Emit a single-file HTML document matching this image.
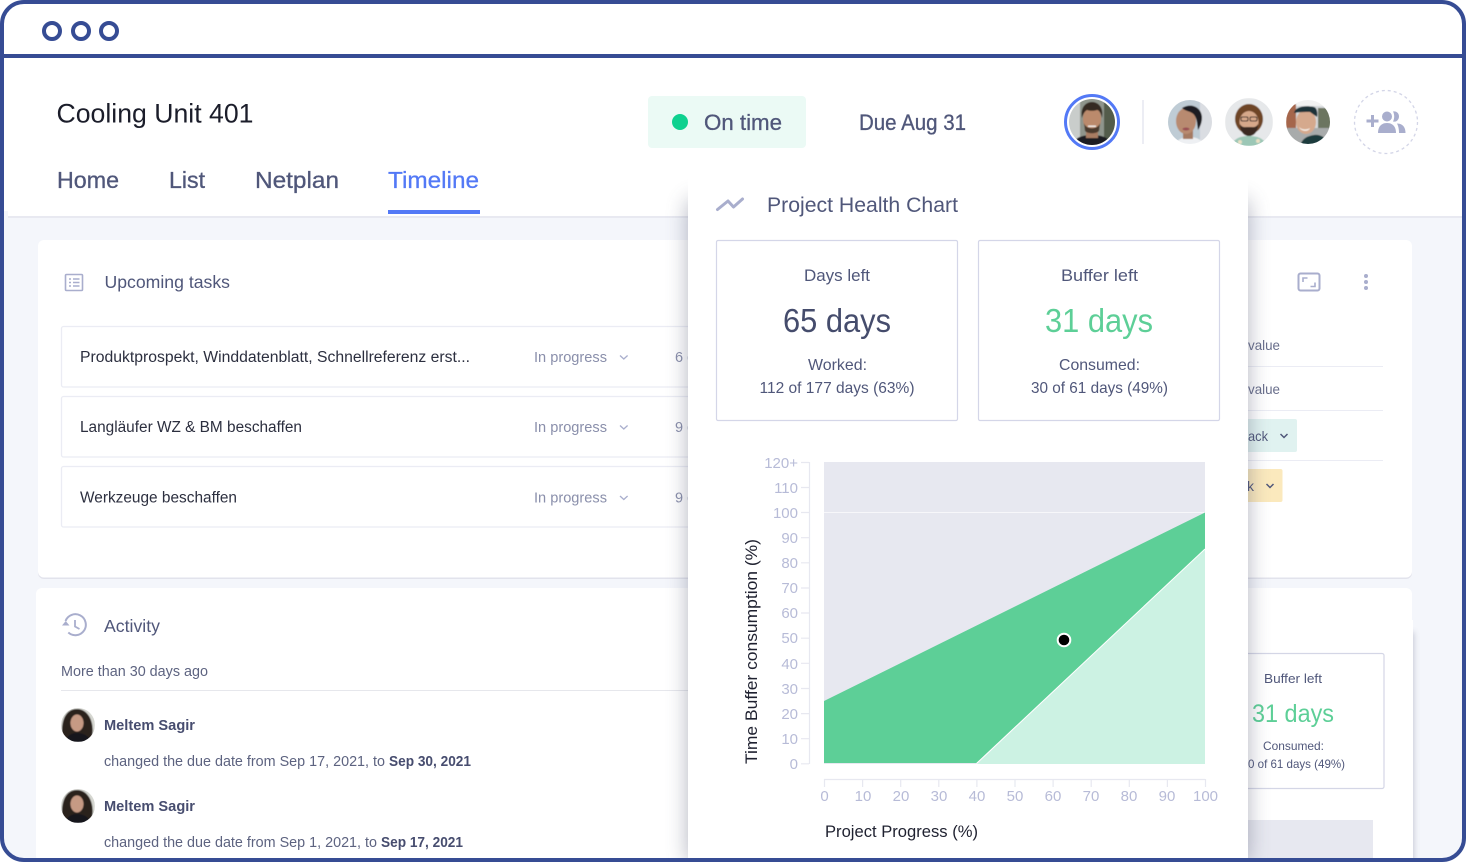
<!DOCTYPE html>
<html lang="en">
<head>
<meta charset="utf-8">
<title>Cooling Unit 401</title>
<style>
html,body{margin:0;padding:0;background:#fff;width:1466px;height:862px;overflow:hidden}
svg{display:block;width:1466px;height:862px;overflow:hidden}
text{font-family:"Liberation Sans",sans-serif;fill:#50577a}
.t{fill:#b7bbd7;font-size:15px}
.e{text-anchor:end}
.m{text-anchor:middle}
.b{stroke-width:.3px}
</style>
</head>
<body>
<svg xmlns="http://www.w3.org/2000/svg" width="1466" height="862" viewBox="0 0 1466 862">
<defs>
<clipPath id="frame"><rect x="3" y="3" width="1460" height="856" rx="21"/></clipPath>
<clipPath id="c0"><circle cx="1092" cy="122" r="23"/></clipPath>
<clipPath id="c1"><circle cx="1190" cy="122" r="22"/></clipPath>
<clipPath id="c2"><circle cx="1249" cy="122" r="24"/></clipPath>
<clipPath id="c3"><circle cx="1308" cy="122" r="22"/></clipPath>
<clipPath id="c4"><circle cx="78" cy="725" r="17"/></clipPath>
<clipPath id="c5"><circle cx="78" cy="806" r="17"/></clipPath>
<filter id="sh" x="-15%" y="-15%" width="130%" height="130%"><feGaussianBlur stdDeviation="11"/></filter>
<filter id="sh2" x="-20%" y="-20%" width="140%" height="140%"><feGaussianBlur stdDeviation="3"/></filter>
<filter id="soft" x="-10%" y="-10%" width="120%" height="120%"><feGaussianBlur stdDeviation="0.6"/></filter>
</defs>

<g clip-path="url(#frame)">
<rect x="0" y="0" width="1466" height="862" fill="#fff"/>
<rect x="0" y="218" width="1466" height="644" fill="#f4f6fb"/>
<rect x="4" y="211" width="4" height="7" fill="#f4f6fb"/>
<rect x="8" y="216" width="1458" height="2" fill="#e8e9f1"/>

<!-- Header -->
<text x="56.500" y="122.500" font-size="27" style="fill:#1b1d2a" textLength="197" lengthAdjust="spacingAndGlyphs">Cooling Unit 401</text>
<text class="b" stroke="#50577a" x="57" y="188" font-size="23" textLength="62" lengthAdjust="spacingAndGlyphs">Home</text>
<text class="b" stroke="#50577a" x="169" y="188" font-size="23" textLength="36" lengthAdjust="spacingAndGlyphs">List</text>
<text class="b" stroke="#50577a" x="255" y="188" font-size="23" textLength="84" lengthAdjust="spacingAndGlyphs">Netplan</text>
<text class="b" stroke="#5379f6" x="388" y="188" font-size="23" style="fill:#5379f6" textLength="91" lengthAdjust="spacingAndGlyphs">Timeline</text>
<rect x="388" y="210" width="92" height="4" fill="#5379f6"/>

<rect x="648" y="96" width="158" height="52" rx="4" fill="#ebfaf5"/>
<circle cx="680" cy="122" r="8" fill="#0ed18f"/>
<text class="b" stroke="#50577a" x="704" y="130" font-size="22" textLength="78" lengthAdjust="spacingAndGlyphs">On time</text>
<text class="b" stroke="#50577a" x="859" y="130" font-size="22" textLength="107" lengthAdjust="spacingAndGlyphs">Due Aug 31</text>

<!-- Avatars -->
<circle cx="1092" cy="122" r="26.500" fill="#fff" stroke="#5379f6" stroke-width="3"/>
<g clip-path="url(#c0)"><g filter="url(#soft)">
<rect x="1068" y="98" width="48" height="48" fill="#8f958c"/>
<rect x="1068" y="98" width="12" height="48" fill="#c9cdcb"/>
<rect x="1104" y="98" width="12" height="48" fill="#525c4c"/>
<path d="M1072 146c2-9 11-11 20-11s18 2 20 11z" fill="#1e1e20"/>
<rect x="1086" y="126" width="12" height="12" fill="#a87b62"/>
<ellipse cx="1092" cy="119" rx="9" ry="13" fill="#bb8a6c"/>
<path d="M1082 118c-2-11 4-16 10-16s12 5 10 16c-1-5-3-8-5-8-3 1-7 1-10 0-2 1-4 4-5 8z" fill="#362a22"/>
<path d="M1084 123c2 7 14 7 16 0l-1 8c-3 3-11 3-14 0z" fill="#4c3a2e"/>
<rect x="1088" y="125.500" width="8" height="1.500" fill="#f2ece6"/>
</g></g>

<rect x="1142" y="100" width="2" height="44" fill="#ecedf4"/>

<g clip-path="url(#c1)"><g filter="url(#soft)">
<rect x="1166" y="98" width="48" height="48" fill="#bfccd5"/>
<rect x="1200" y="98" width="14" height="48" fill="#dadde2"/>
<path d="M1174 146c3-7 9-9 16-9s12 3 15 9z" fill="#eef0f3"/>
<rect x="1183" y="128" width="10" height="11" fill="#a57a62"/>
<ellipse cx="1186" cy="121" rx="10" ry="13" fill="#b88a70"/>
<path d="M1182 108c8-5 19-2 20 9 0 6-2 10-4 13-1-7-1-14-6-17-3-2-7-2-10-5z" fill="#1d1b20"/>
<ellipse cx="1186" cy="129" rx="3.500" ry="1.500" fill="#9a4f55"/>
</g></g>

<g clip-path="url(#c2)"><g filter="url(#soft)">
<rect x="1225" y="98" width="48" height="48" fill="#e6e8ea"/>
<path d="M1231 146c3-8 10-10 18-10s15 2 18 10z" fill="#9cc7b6"/>
<circle cx="1240" cy="142" r="2" fill="#e9e0c4"/><circle cx="1258" cy="141" r="2" fill="#e9e0c4"/>
<ellipse cx="1249" cy="119" rx="14" ry="15" fill="#6e4526"/>
<ellipse cx="1249" cy="122" rx="9.500" ry="11" fill="#d6a88a"/>
<path d="M1240 124c2 4 5 3 9 3s7 1 9-3c0 8-4 12-9 12s-9-4-9-12z" fill="#3a2a20"/>
<rect x="1241" y="117" width="7" height="4" rx="1.500" fill="none" stroke="#2a2320" stroke-width="1"/>
<rect x="1250" y="117" width="7" height="4" rx="1.500" fill="none" stroke="#2a2320" stroke-width="1"/>
</g></g>

<g clip-path="url(#c3)"><g filter="url(#soft)">
<rect x="1286" y="98" width="48" height="48" fill="#d5d8da"/>
<rect x="1286" y="98" width="48" height="8" fill="#f2f2f2"/>
<rect x="1286" y="104" width="10" height="24" fill="#a5664c"/>
<rect x="1318" y="108" width="14" height="24" fill="#6c7561"/>
<rect x="1286" y="128" width="48" height="18" fill="#a8abab"/>
<path d="M1300 146c2-8 8-10 14-11s14 3 16 11z" fill="#1f3b3d"/>
<ellipse cx="1306" cy="122" rx="10" ry="12" fill="#d5a98d"/>
<path d="M1294 113c1-6 10-8 20-6 3 1 4 6 3 10l-7-5c-5 0-11 0-16 1z" fill="#1d3338"/>
<path d="M1299 127c3 3 8 3 11 1-1 4-9 4-11-1z" fill="#f5efe8"/>
</g></g>

<!-- Add user -->
<circle cx="1386" cy="122" r="31.500" fill="#fff" stroke="#d3d5e7" stroke-width="1.300" stroke-dasharray="3 3"/>
<path d="M1366.500 119.500h4.500V115h3v4.500h4.500v3H1374v4.500h-3v-4.500h-4.500z" fill="#a9aecd"/>
<circle cx="1387" cy="116.500" r="5" fill="#a9aecd"/>
<path d="M1378 133c0-7 4-10 9-10s9 3 9 10z" fill="#a9aecd"/>
<path d="M1393 111.500c3-.8 6 1.500 6 5s-3 5.800-6 5c1.600-3 1.600-7 0-10z" fill="#a9aecd"/>
<path d="M1397 123.500c5 0 8.500 3 8.500 9.500H1399c0-4-.7-7-2-9.500z" fill="#a9aecd"/>

<!-- Card 1 -->
<rect x="38" y="241" width="1374" height="338" rx="6" fill="#e2e3ec"/>
<rect x="38" y="240" width="1374" height="337.500" rx="6" fill="#fff"/>
<rect x="65.500" y="274.500" width="17" height="16" rx="1" fill="none" stroke="#a9aecd" stroke-width="1.600"/>
<path d="M69 279h2M73 279h6.500M69 282.500h2M73 282.500h6.500M69 286h2M73 286h6.500" stroke="#a9aecd" stroke-width="1.400" fill="none"/>
<text x="104.500" y="288" font-size="17.500" textLength="125.500" lengthAdjust="spacingAndGlyphs">Upcoming tasks</text>

<g fill="#fff" stroke="#ebecf4" stroke-width="1.300">
<rect x="61.500" y="326.500" width="700" height="60.500" rx="2"/>
<rect x="61.500" y="396.500" width="700" height="60.500" rx="2"/>
<rect x="61.500" y="466.500" width="700" height="60.500" rx="2"/>
</g>
<g font-size="15.500">
<text x="80" y="362" style="fill:#2c2f3f" textLength="390" lengthAdjust="spacingAndGlyphs">Produktprospekt, Winddatenblatt, Schnellreferenz erst...</text>
<text x="80" y="432" style="fill:#2c2f3f" textLength="222" lengthAdjust="spacingAndGlyphs">Langläufer WZ &amp; BM beschaffen</text>
<text x="80" y="502.500" style="fill:#2c2f3f" textLength="157" lengthAdjust="spacingAndGlyphs">Werkzeuge beschaffen</text>
</g>
<g font-size="14.500">
<text x="534" y="362" style="fill:#8a8fab" textLength="73" lengthAdjust="spacingAndGlyphs">In progress</text>
<text x="534" y="432" style="fill:#8a8fab" textLength="73" lengthAdjust="spacingAndGlyphs">In progress</text>
<text x="534" y="502.500" style="fill:#8a8fab" textLength="73" lengthAdjust="spacingAndGlyphs">In progress</text>
<text x="675" y="362" style="fill:#8a8fab">6 d</text>
<text x="675" y="432" style="fill:#8a8fab">9 d</text>
<text x="675" y="502.500" style="fill:#8a8fab">9 d</text>
</g>
<g fill="none" stroke="#a9aecd" stroke-width="1.300">
<path d="M620 355.500l3.800 3.500 3.800-3.500M620 425.500l3.800 3.500 3.800-3.500M620 496l3.800 3.500 3.800-3.500"/>
</g>

<!-- Right side of card 1 -->
<rect x="1298.500" y="273.500" width="21" height="17" rx="2" fill="none" stroke="#a9aecd" stroke-width="2"/>
<path d="M1303 282v-4h4.500M1315 282.500v4h-4.500" fill="none" stroke="#a9aecd" stroke-width="1.600"/>
<circle cx="1366" cy="276" r="2" fill="#a9aecd"/><circle cx="1366" cy="282" r="2" fill="#a9aecd"/><circle cx="1366" cy="288" r="2" fill="#a9aecd"/>
<text x="1248" y="350" font-size="14" textLength="32" lengthAdjust="spacingAndGlyphs" style="fill:#686e8b">value</text>
<rect x="1220" y="366" width="163" height="1" fill="#ebecf4"/>
<text x="1248" y="394" font-size="14" textLength="32" lengthAdjust="spacingAndGlyphs" style="fill:#686e8b">value</text>
<rect x="1220" y="410" width="163" height="1" fill="#ebecf4"/>
<rect x="1200" y="419" width="97" height="33" rx="2" fill="#e0f2f0"/>
<text x="1248" y="441" font-size="14" textLength="20" lengthAdjust="spacingAndGlyphs">ack</text>
<path d="M1280.500 434l3.500 3.500 3.500-3.500" fill="none" stroke="#50577a" stroke-width="1.500"/>
<rect x="1220" y="460" width="163" height="1" fill="#ebecf4"/>
<rect x="1200" y="469" width="82.500" height="33" rx="2" fill="#fbe9bd"/>
<text x="1247" y="491" font-size="14">k</text>
<path d="M1266.500 484l3.500 3.500 3.500-3.500" fill="none" stroke="#50577a" stroke-width="1.500"/>

<!-- Card 2 -->
<rect x="36" y="588" width="1376" height="274" rx="6" fill="#fff"/>
<path d="M65.500 621a10.500 10.500 0 1 1 2.800 11.500" fill="none" stroke="#a9aecd" stroke-width="2"/>
<path d="M62 625.500h7.500l-3.800-4.500z" fill="#a9aecd"/>
<path d="M75 620v6.500l4.500 2.500" fill="none" stroke="#a9aecd" stroke-width="1.800"/>
<text x="104" y="632" font-size="17.500" textLength="56" lengthAdjust="spacingAndGlyphs">Activity</text>
<text x="61" y="676" font-size="15" textLength="147" lengthAdjust="spacingAndGlyphs" style="fill:#5d6380">More than 30 days ago</text>
<rect x="61" y="690" width="640" height="1" fill="#e6e7ec"/>

<g clip-path="url(#c4)"><g filter="url(#soft)">
<rect x="61" y="708" width="34" height="34" fill="#d6d7d1"/>
<path d="M64 742c-4-10-3-33 13-33 15 0 19 22 13 33z" fill="#2a211d"/>
<ellipse cx="77" cy="723" rx="6.500" ry="8.500" fill="#c69a84"/>
<path d="M65 742c2-6 6-9 12-9s12 3 14 9z" fill="#15151a"/>
</g></g>
<text x="104" y="730" font-size="14.500" font-weight="700" textLength="91" lengthAdjust="spacingAndGlyphs" style="fill:#474d6f">Meltem Sagir</text>
<text x="104" y="766" font-size="14.500" textLength="281" lengthAdjust="spacingAndGlyphs" style="fill:#5d6380">changed the due date from Sep 17, 2021, to</text>
<text x="389" y="766" font-size="14.500" font-weight="700" textLength="82" lengthAdjust="spacingAndGlyphs" style="fill:#474d6f">Sep 30, 2021</text>

<g clip-path="url(#c5)"><g filter="url(#soft)">
<rect x="61" y="789" width="34" height="34" fill="#d6d7d1"/>
<path d="M64 823c-4-10-3-33 13-33 15 0 19 22 13 33z" fill="#2a211d"/>
<ellipse cx="77" cy="804" rx="6.500" ry="8.500" fill="#c69a84"/>
<path d="M65 823c2-6 6-9 12-9s12 3 14 9z" fill="#15151a"/>
</g></g>
<text x="104" y="811" font-size="14.500" font-weight="700" textLength="91" lengthAdjust="spacingAndGlyphs" style="fill:#474d6f">Meltem Sagir</text>
<text x="104" y="847" font-size="14.500" textLength="273" lengthAdjust="spacingAndGlyphs" style="fill:#5d6380">changed the due date from Sep 1, 2021, to</text>
<text x="381" y="847" font-size="14.500" font-weight="700" textLength="82" lengthAdjust="spacingAndGlyphs" style="fill:#474d6f">Sep 17, 2021</text>

<!-- Back popup -->
<rect x="1100" y="632" width="314" height="230" fill="#8f92a8" opacity=".45" filter="url(#sh2)"/>
<rect x="1100" y="620" width="313" height="242" fill="#fff"/>
<rect x="1100" y="653.500" width="284" height="135" rx="2" fill="#fff" stroke="#d4d6e6" stroke-width="1.200"/>
<text x="1264" y="683" font-size="13" textLength="58" lengthAdjust="spacingAndGlyphs">Buffer left</text>
<text x="1252" y="722" font-size="25" textLength="82" lengthAdjust="spacingAndGlyphs" style="fill:#5dcf97">31 days</text>
<text x="1263" y="750" font-size="12" textLength="61" lengthAdjust="spacingAndGlyphs">Consumed:</text>
<text x="1248" y="768" font-size="12" textLength="97" lengthAdjust="spacingAndGlyphs">0 of 61 days (49%)</text>
<rect x="1100" y="820" width="273" height="42" fill="#e7e8f0"/>

<!-- Main popup -->
<rect x="688" y="200" width="560" height="662" fill="#4a4e68" opacity=".42" filter="url(#sh)"/>
<rect x="688" y="170" width="560" height="692" fill="#fff"/>
<path d="M717.500 209.500l10.500-8.500 5.500 6 9-8" fill="none" stroke="#a9aecd" stroke-width="3" stroke-linejoin="round" stroke-linecap="round"/>
<text x="767" y="212" font-size="21" textLength="191" lengthAdjust="spacingAndGlyphs">Project Health Chart</text>

<rect x="716.500" y="240.500" width="241" height="180" rx="1.500" fill="#fff" stroke="#d4d6e8" stroke-width="1.200"/>
<rect x="978.500" y="240.500" width="241" height="180" rx="1.500" fill="#fff" stroke="#d4d6e8" stroke-width="1.200"/>
<text x="804" y="281" font-size="17" textLength="66" lengthAdjust="spacingAndGlyphs">Days left</text>
<text x="783" y="332" font-size="33" textLength="108" lengthAdjust="spacingAndGlyphs" style="fill:#454c6c">65 days</text>
<text x="808" y="370" font-size="16" textLength="59" lengthAdjust="spacingAndGlyphs">Worked:</text>
<text x="759.500" y="393" font-size="16" textLength="155" lengthAdjust="spacingAndGlyphs">112 of 177 days (63%)</text>
<text x="1061" y="281" font-size="17" textLength="77" lengthAdjust="spacingAndGlyphs">Buffer left</text>
<text x="1045" y="332" font-size="33" textLength="108" lengthAdjust="spacingAndGlyphs" style="fill:#5dcf97">31 days</text>
<text x="1059" y="370" font-size="16" textLength="81" lengthAdjust="spacingAndGlyphs">Consumed:</text>
<text x="1031" y="393" font-size="16" textLength="137" lengthAdjust="spacingAndGlyphs">30 of 61 days (49%)</text>

<!-- Chart -->
<rect x="824" y="462" width="381" height="302" fill="#e7e8f0"/>
<rect x="824" y="512" width="381" height="1" fill="#f7f7fa"/>
<path d="M977 764L1205 549V764z" fill="#ccf2e3"/>
<path d="M824 701L1205 512.500V549L976.500 763H824z" fill="#5dcf97"/>
<path d="M976.500 763.500L1205 549" stroke="#fff" stroke-width="1" fill="none"/>
<circle cx="1064" cy="640" r="6.300" fill="#000" stroke="#fff" stroke-width="2"/>

<path d="M809.500 462V764" stroke="#e7e8f0" stroke-width="1.200"/>
<path d="M801 462.500h8M801 487.500h8M801 512.500h8M801 537.700h8M801 562.800h8M801 588h8M801 613h8M801 638.200h8M801 663.300h8M801 688.500h8M801 713.600h8M801 738.700h8M801 763.800h8" stroke="#e7e8f0" stroke-width="1.200"/>
<path d="M824 779.500H1205" stroke="#e7e8f0" stroke-width="1.200"/>
<path d="M824.500 779v8M862.600 779v8M900.700 779v8M938.800 779v8M976.900 779v8M1015 779v8M1053.100 779v8M1091.200 779v8M1129.300 779v8M1167.400 779v8M1205.500 779v8" stroke="#e7e8f0" stroke-width="1.200"/>

<g>
<text class="t e" x="798" y="468">120+</text>
<text class="t e" x="798" y="493">110</text>
<text class="t e" x="798" y="518">100</text>
<text class="t e" x="798" y="543">90</text>
<text class="t e" x="798" y="568">80</text>
<text class="t e" x="798" y="593">70</text>
<text class="t e" x="798" y="618">60</text>
<text class="t e" x="798" y="643">50</text>
<text class="t e" x="798" y="669">40</text>
<text class="t e" x="798" y="694">30</text>
<text class="t e" x="798" y="719">20</text>
<text class="t e" x="798" y="744">10</text>
<text class="t e" x="798" y="769">0</text>
<text class="t m" x="824.500" y="801">0</text>
<text class="t m" x="863" y="801">10</text>
<text class="t m" x="901" y="801">20</text>
<text class="t m" x="939" y="801">30</text>
<text class="t m" x="977" y="801">40</text>
<text class="t m" x="1015" y="801">50</text>
<text class="t m" x="1053" y="801">60</text>
<text class="t m" x="1091" y="801">70</text>
<text class="t m" x="1129" y="801">80</text>
<text class="t m" x="1167" y="801">90</text>
<text class="t m" x="1205.500" y="801">100</text>
</g>
<text transform="translate(757 764) rotate(-90)" font-size="16.500" textLength="225" lengthAdjust="spacingAndGlyphs" style="fill:#1f2130">Time Buffer consumption (%)</text>
<text x="825" y="837" font-size="16.500" textLength="153" lengthAdjust="spacingAndGlyphs" style="fill:#1f2130">Project Progress (%)</text>
</g>

<!-- Window frame -->
<rect x="2" y="2" width="1462" height="858" rx="22" fill="none" stroke="#364c94" stroke-width="4"/>
<rect x="2" y="54" width="1462" height="4" fill="#364c94"/>
<circle cx="52" cy="31" r="8" fill="#fff" stroke="#364c94" stroke-width="4"/>
<circle cx="81" cy="31" r="8" fill="#fff" stroke="#364c94" stroke-width="4"/>
<circle cx="109" cy="31" r="8" fill="#fff" stroke="#364c94" stroke-width="4"/>
</svg>
</body>
</html>
